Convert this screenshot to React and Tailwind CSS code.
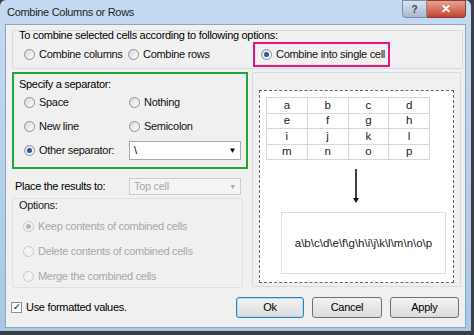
import { useState } from "react";

const font = { fontFamily: '"Liberation Sans", Arial, sans-serif' };

function Radio({ checked, disabled, label, className = "" }) {
    return (
        <div className={"flex items-center gap-[4px] whitespace-nowrap " + className}>
            <span className={"w-[11px] h-[11px] shrink-0 rounded-full border flex items-center justify-center " + (disabled ? "border-[#c8c8c8] bg-[#f2f2f2]" : "border-[#8e8f8f] bg-gradient-to-br from-[#d8d8d8] to-[#ffffff]")}>
                {checked && <span className={"w-[5px] h-[5px] rounded-full " + (disabled ? "bg-[#b4b4b4]" : "bg-[#1f5ca8]")}></span>}
            </span>
            <span className={disabled ? "text-[#a8a8a8]" : "text-[#111]"}>{label}</span>
        </div>
    )
}

export default function App() {

    const [sep] = useState('\\')
    const letters = ['a', 'b', 'c', 'd', 'e', 'f', 'g', 'h', 'i', 'j', 'k', 'l', 'm', 'n', 'o', 'p']

    return (
        <div className="w-[474px] h-[335px] bg-[#3a3f47] overflow-hidden text-[11px] leading-[11px] tracking-[-0.3px]" style={font}>
            <div className="relative w-[471px] h-[331px] bg-gradient-to-b from-[#c4daf0] to-[#a9c7e6] rounded-t-[6px] flex flex-col">

                <div className="h-[24px] flex items-center pl-[7px] text-[11px] text-[#1e1e1e]">Combine Columns or Rows</div>

                <div className="absolute top-0 right-[5px] flex tracking-normal">
                    <div className="w-[25px] h-[18px] rounded-bl-[4px] border border-[#7b8ea6] bg-gradient-to-b from-[#d9e4f1] to-[#a6b9d0] flex items-center justify-center text-[10px] font-bold text-[#445]">?</div>
                    <div className="w-[39px] h-[18px] rounded-br-[4px] border border-l-0 border-[#8a3a2e] bg-gradient-to-b from-[#e6a293] to-[#c2412b] flex items-center justify-center text-[12px] font-bold text-white">✕</div>
                </div>

                <div className="mx-[5px] h-[304px] border border-[#8fa4bd] bg-[#f0f0f0] flex flex-col px-[6px] pt-[5px]">

                    <div className="w-[451px] h-[39px] border border-[#d5dbe1] rounded-[2px] px-[6px] flex flex-col">
                        <div className="h-[11px] leading-[11px] mt-[-1px]">To combine selected cells according to following options:</div>
                        <div className="flex items-center h-[25px] mt-[1px]">
                            <Radio label="Combine columns" className="ml-[5px] w-[104px]" />
                            <Radio label="Combine rows" className="w-[125px]" />
                            <div className="w-[137px] h-[25px] border-2 border-[#e5177e] flex items-center pl-[6px]">
                                <Radio checked label="Combine into single cell" className="gap-[3px]" />
                            </div>
                        </div>
                    </div>

                    <div className="flex mt-[3px] gap-[4px]">
                        <div className="w-[237px] flex flex-col">
                            <div className="h-[97px] border-2 border-[#1ea83c] px-[5px] pt-[5px]">
                                <div>Specify a separator:</div>
                                <div className="flex flex-col gap-[13px] mt-[7px] pl-[5px]">
                                    <div className="flex items-center h-[11px]">
                                        <Radio label="Space" className="w-[105px]" />
                                        <Radio label="Nothing" />
                                    </div>
                                    <div className="flex items-center h-[11px]">
                                        <Radio label="New line" className="w-[105px]" />
                                        <Radio label="Semicolon" />
                                    </div>
                                    <div className="flex items-center h-[11px]">
                                        <Radio checked label="Other separator:" className="w-[105px]" />
                                        <div className="w-[112px] h-[19px] shrink-0 border border-[#aaaaaa] bg-white flex items-center justify-between px-[4px]">
                                            <span>{sep}</span>
                                            <span className="text-[8px]">▼</span>
                                        </div>
                                    </div>
                                </div>
                            </div>

                            <div className="flex items-center mt-[9px] h-[17px]">
                                <span className="ml-[3px] w-[114px]">Place the results to:</span>
                                <div className="w-[112px] h-[17px] border border-[#cccccc] bg-[#f4f4f4] flex items-center justify-between px-[4px] text-[#a8a8a8]">
                                    <span>Top cell</span>
                                    <span className="text-[7px]">▼</span>
                                </div>
                            </div>

                            <div className="w-[231px] h-[90px] mt-[3px] border border-[#dde1e5] rounded-[2px] px-[6px] pt-[1px]">
                                <div className="text-[#222]">Options:</div>
                                <div className="flex flex-col gap-[14px] mt-[10px] pl-[4px]">
                                    <Radio disabled checked label="Keep contents of combined cells" className="h-[11px]" />
                                    <Radio disabled label="Delete contents of combined cells" className="h-[11px]" />
                                    <Radio disabled label="Merge the combined cells" className="h-[11px]" />
                                </div>
                            </div>
                        </div>

                        <div className="w-[210px] h-[215px] border border-[#d5dbe1] rounded-[2px] px-[6px] pt-[17px]">
                            <div className="w-[195px] h-[193px] border border-dashed border-[#666] bg-white flex flex-col pt-[6px] tracking-normal">
                                <div className="grid grid-cols-4 w-[164px] ml-[6px] border-t border-l border-[#d3d8e2]">
                                    {letters.map(l => (
                                        <div key={l} className="h-[15.5px] border-r border-b border-[#d3d8e2] flex items-center justify-center text-[11.5px] text-[#222]">{l}</div>
                                    ))}
                                </div>
                                <svg width="8" height="35" className="mt-[9px] ml-[92px]" viewBox="0 0 8 35">
                                    <line x1="4" y1="0" x2="4" y2="30" stroke="#111" strokeWidth="1.6" />
                                    <path d="M1 29 L4 34 L7 29 Z" fill="#111" />
                                </svg>
                                <div className="w-[165px] h-[62px] mt-[8px] ml-[21px] border border-[#d8dde6] flex items-center justify-center text-[11.5px] text-[#222]">
                                    {letters.join('\\')}
                                </div>
                            </div>
                        </div>
                    </div>

                    <div className="flex items-center mt-[9px]">
                        <div className="flex items-center gap-[4px] w-[227px] ml-[-1px]">
                            <span className="w-[11px] h-[11px] border border-[#8e8f8f] bg-white flex items-center justify-center text-[9px] text-[#2d4f8a] font-bold">✓</span>
                            <span>Use formatted values.</span>
                        </div>
                        <button className="w-[69px] h-[21px] rounded-[3px] border border-[#3c7fb1] bg-gradient-to-b from-[#f2f2f2] to-[#dcdcdc] shadow-[inset_0_0_0_1px_#a8dcf5]">Ok</button>
                        <button className="ml-[8px] w-[70px] h-[21px] rounded-[3px] border border-[#707070] bg-gradient-to-b from-[#f2f2f2] to-[#dcdcdc]">Cancel</button>
                        <button className="ml-[8px] w-[70px] h-[21px] rounded-[3px] border border-[#707070] bg-gradient-to-b from-[#f2f2f2] to-[#dcdcdc]">Apply</button>
                    </div>
                </div>
            </div>
        </div>
    )
}
